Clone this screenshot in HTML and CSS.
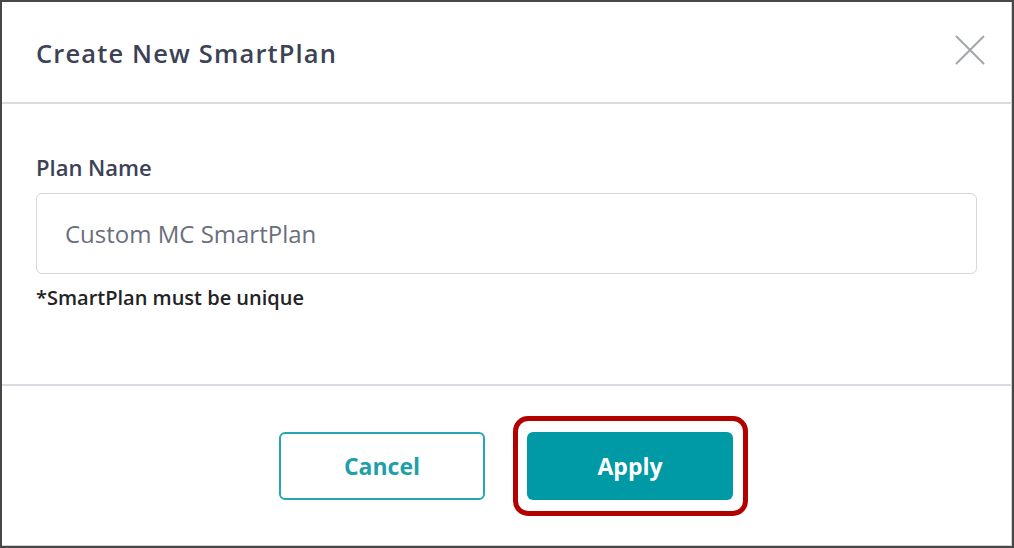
FILE: index.html
```html
<!DOCTYPE html>
<html lang="en">
<head>
<meta charset="utf-8">
<title>Create New SmartPlan</title>
<link rel="stylesheet" href="styles.css">
</head>
<body>
<div class="frame">
  <div class="modal">
    <header class="modal-header">
      <h1 class="modal-title">Create New SmartPlan</h1>
      <button class="close-btn" aria-label="Close">
        <svg width="30" height="30" viewBox="0 0 30 30"><path d="M1 1 L29 29 M29 1 L1 29" stroke="#a3a7ab" stroke-width="2" fill="none"/></svg>
      </button>
    </header>
    <section class="modal-body">
      <label class="field-label" for="plan">Plan Name</label>
      <div class="input-box" id="plan">Custom MC SmartPlan</div>
      <p class="hint">*SmartPlan must be unique</p>
    </section>
    <footer class="modal-footer">
      <button class="btn btn-outline">Cancel</button>
      <div class="highlight">
        <button class="btn btn-primary">Apply</button>
      </div>
    </footer>
  </div>
</div>
</body>
</html>
```

FILE: styles.css
```css
* { box-sizing: border-box; }
html, body { margin: 0; padding: 0; background: #fff; }
body { font-family: "Open Sans", "Noto Sans", sans-serif; }

.frame {
  width: 1014px;
  height: 548px;
  border: 2px solid #474747;
  background: #fff;
}
.modal {
  height: 100%;
  display: flex;
  flex-direction: column;
  border-right: 1px solid #d4d4d4;
  border-bottom: 1px solid #d4d4d4;
}
.modal-header {
  height: 102px;
  flex: none;
  display: flex;
  align-items: center;
  justify-content: space-between;
  padding: 0 26px 0 34px;
  border-bottom: 2px solid #d9dde1;
}
.modal-title {
  margin: 0;
  font-size: 25.5px;
  font-weight: 600;
  color: #3b4255;
  letter-spacing: 1.15px;
  padding-top: 2px;
}
.close-btn {
  border: none;
  background: none;
  padding: 0;
  width: 30px;
  height: 30px;
  margin-bottom: 4px;
}
.close-btn svg { display: block; }

.modal-body {
  height: 282px;
  flex: none;
  padding: 51px 34px 0 34px;
  border-bottom: 2px solid #d9dde1;
}
.field-label {
  display: block;
  font-size: 22px;
  font-weight: 600;
  color: #3b4255;
  line-height: 24px;
  margin-bottom: 14px;
}
.input-box {
  width: 941px;
  height: 81px;
  border: 1.5px solid #d3d7db;
  border-radius: 6px;
  padding: 0 28px;
  display: flex;
  align-items: center;
  font-size: 24px;
  color: #6a6f7b;
}
.hint {
  margin: 13px 0 0 0;
  font-size: 20px;
  font-weight: 600;
  color: #232323;
  line-height: 22px;
}

.modal-footer {
  flex: 1;
  display: flex;
  justify-content: center;
  align-items: center;
  gap: 28px;
  padding-left: 14px;
}
.btn {
  width: 206px;
  height: 68px;
  border-radius: 6px;
  font-family: inherit;
  font-size: 23px;
  font-weight: 700;
  cursor: pointer;
}
.btn-outline {
  background: #fff;
  border: 2px solid #25a7b1;
  color: #1f9fa9;
}
.btn-primary {
  background: #0099a6;
  border: none;
  color: #fff;
  display: block;
}
.highlight {
  border: 5px solid #b30000;
  border-radius: 15px;
  padding: 11px 10px 11px 9px;
}
```
